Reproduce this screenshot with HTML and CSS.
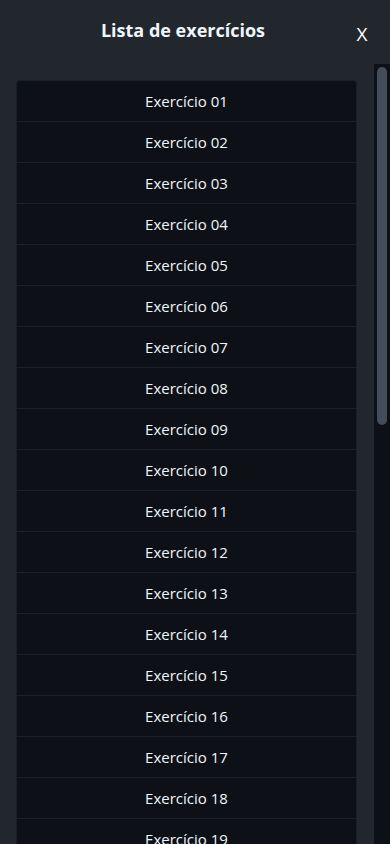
FILE: index.html
```html
<!DOCTYPE html>
<html lang="pt-BR">
<head>
<meta charset="utf-8">
<meta name="viewport" content="width=device-width, initial-scale=1">
<link rel="stylesheet" href="styles.css">
<title>Lista de exercícios</title>
</head>
<body>
<div class="app">
  <header class="header">
    <h1 class="title">Lista de exercícios</h1>
    <button class="close" type="button">X</button>
  </header>
  <div class="body">
    <div class="scroll">
      <ul class="list">
        <li class="item">Exercício 01</li>
        <li class="item">Exercício 02</li>
        <li class="item">Exercício 03</li>
        <li class="item">Exercício 04</li>
        <li class="item">Exercício 05</li>
        <li class="item">Exercício 06</li>
        <li class="item">Exercício 07</li>
        <li class="item">Exercício 08</li>
        <li class="item">Exercício 09</li>
        <li class="item">Exercício 10</li>
        <li class="item">Exercício 11</li>
        <li class="item">Exercício 12</li>
        <li class="item">Exercício 13</li>
        <li class="item">Exercício 14</li>
        <li class="item">Exercício 15</li>
        <li class="item">Exercício 16</li>
        <li class="item">Exercício 17</li>
        <li class="item">Exercício 18</li>
        <li class="item">Exercício 19</li>
        <li class="item">Exercício 20</li>
        <li class="item">Exercício 21</li>
        <li class="item">Exercício 22</li>
        <li class="item">Exercício 23</li>
        <li class="item">Exercício 24</li>
        <li class="item">Exercício 25</li>
        <li class="item">Exercício 26</li>
        <li class="item">Exercício 27</li>
        <li class="item">Exercício 28</li>
        <li class="item">Exercício 29</li>
        <li class="item">Exercício 30</li>
        <li class="item">Exercício 31</li>
        <li class="item">Exercício 32</li>
        <li class="item">Exercício 33</li>
        <li class="item">Exercício 34</li>
        <li class="item">Exercício 35</li>
        <li class="item">Exercício 36</li>
        <li class="item">Exercício 37</li>
        <li class="item">Exercício 38</li>
        <li class="item">Exercício 39</li>
        <li class="item">Exercício 40</li>
      </ul>
    </div>
    <div class="track" aria-hidden="true"><div class="thumb"></div></div>
  </div>
</div>
</body>
</html>
```
FILE: styles.css
```css
* { box-sizing: border-box; }
html, body {
  margin: 0;
  padding: 0;
  height: 100%;
  background: #22272e;
  color: #f0f6fc;
  font-family: "Open Sans", "Noto Sans", "Liberation Sans", sans-serif;
  overflow: hidden;
}
.app {
  height: 100vh;
  display: flex;
  flex-direction: column;
}
.header {
  height: 64px;
  flex: none;
  display: flex;
  align-items: center;
  padding: 0 16px;
}
.title {
  flex: 1;
  margin: 0 0 4px 0;
  text-align: center;
  font-size: 18px;
  font-weight: 700;
  color: #f0f6fc;
}
.close {
  width: 24px;
  height: 24px;
  padding: 0;
  margin-top: 3px;
  border: none;
  background: transparent;
  color: #ffffff;
  font-family: "Open Sans", "Noto Sans", sans-serif;
  font-size: 19px;
  line-height: 24px;
  cursor: pointer;
}
.body {
  flex: 1;
  min-height: 0;
  display: flex;
}
.scroll {
  flex: 1;
  min-width: 0;
  overflow: hidden;
  padding: 16px 17px 16px 16px;
}
.track {
  width: 16px;
  flex: none;
  background: #0d1117;
  padding: 3px;
}
.thumb {
  height: 358px;
  border-radius: 5px;
  background: #434c59;
}
.list {
  list-style: none;
  margin: 0;
  padding: 0;
  background: #0d1117;
  border: 1px solid #1a1f27;
  border-radius: 4px;
}
.item {
  height: 41px;
  display: flex;
  align-items: center;
  justify-content: center;
  font-size: 15px;
  color: #f0f6fc;
  border-bottom: 1px solid #1c2129;
}
.item:last-child { border-bottom: none; }
```
